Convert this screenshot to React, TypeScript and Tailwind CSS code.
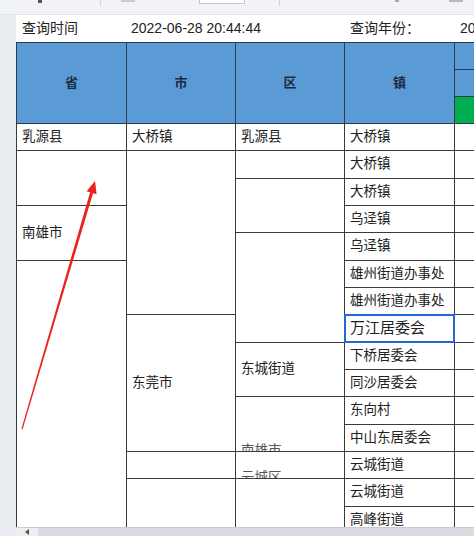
import React from 'react'

type Cell = { pos: string; text?: string; clip?: boolean }

const rowStart = [
  'row-start-1', 'row-start-2', 'row-start-3', 'row-start-4', 'row-start-5',
  'row-start-6', 'row-start-7', 'row-start-8', 'row-start-9', 'row-start-10',
  'row-start-11', 'row-start-12', 'row-start-13', 'row-start-14', 'row-start-15',
]

const towns = [
  '大桥镇', '大桥镇', '大桥镇', '乌迳镇', '乌迳镇', '雄州街道办事处', '雄州街道办事处',
  '万江居委会', '下桥居委会', '同沙居委会', '东向村', '中山东居委会', '云城街道', '云城街道', '高峰街道',
]

// merged cells of the first three columns
const merged: Cell[] = [
  { pos: 'col-start-1 row-start-1', text: '乳源县' },
  { pos: 'col-start-1 row-start-2 row-span-2' },
  { pos: 'col-start-1 row-start-4 row-span-2', text: '南雄市' },
  { pos: 'col-start-1 row-start-6 row-span-10' },
  { pos: 'col-start-2 row-start-1', text: '大桥镇' },
  { pos: 'col-start-2 row-start-2 row-span-6' },
  { pos: 'col-start-2 row-start-8 row-span-5', text: '东莞市' },
  { pos: 'col-start-2 row-start-13' },
  { pos: 'col-start-2 row-start-14 row-span-2' },
  { pos: 'col-start-3 row-start-1', text: '乳源县' },
  { pos: 'col-start-3 row-start-2' },
  { pos: 'col-start-3 row-start-3 row-span-2' },
  { pos: 'col-start-3 row-start-5 row-span-4' },
  { pos: 'col-start-3 row-start-9 row-span-2', text: '东城街道' },
  { pos: 'col-start-3 row-start-11 row-span-2', text: '南雄市', clip: true },
  { pos: 'col-start-3 row-start-13', text: '云城区', clip: true },
  { pos: 'col-start-3 row-start-14 row-span-2' },
]

const cellBase = 'border-r border-b border-[#3a3a3a] flex pl-[5px] text-[13.5px] text-[#222] whitespace-nowrap overflow-hidden'

function Arrow() {
  return (
    <svg className="absolute inset-0 pointer-events-none" width="474" height="536" viewBox="0 0 474 536">
      <polygon points="21.4,428.9 22.6,429.2 93.1,192.9 90.2,192.0" fill="#e8231c" />
      <polygon points="95,181 96.6,194.2 86.6,191.2" fill="#e8231c" />
    </svg>
  )
}

export default function App() {
  return (
    <div className="relative w-[474px] h-[536px] overflow-hidden bg-white flex flex-col font-['Liberation_Sans','Noto_Sans_CJK_SC',sans-serif]">
      {/* cut-off ribbon */}
      <div className="h-[15px] shrink-0 bg-[#f1f3f6] border-b border-[#e1e4e8] flex items-start">
        <div className="ml-[38px] w-[4px] h-[3px] bg-[#555]" />
        <div className="ml-[58px] w-px h-[6px] bg-[#d2d4d8]" />
        <div className="ml-[20px] w-[14px] h-[2px] bg-[#c9ccd1]" />
        <div className="ml-[64px] w-[46px] h-[4px] bg-white border-x border-b border-[#c4c7cc]" />
        <div className="ml-[34px] w-px h-[6px] bg-[#d2d4d8]" />
        <div className="ml-[115px] w-[4px] h-[2px] bg-[#aaa]" />
        <div className="ml-[50px] w-[14px] h-[2px] bg-[#bbb]" />
      </div>

      <div className="flex-1 flex min-h-0">
        <div className="w-[16px] shrink-0 bg-[#e9ecf0]" />

        <div className="flex-1 min-w-0 flex flex-col">
          {/* info row */}
          <div className="h-[27px] shrink-0 grid grid-cols-[110px_109px_109px_110px_1fr] items-center text-[14px] text-[#222] whitespace-nowrap overflow-hidden">
            <span className="pl-[6px]">查询时间</span>
            <span className="pl-[5px] col-span-2">2022-06-28 20:44:44</span>
            <span className="pl-[6px]">查询年份：</span>
            <span className="pl-[6px]">2022</span>
          </div>

          {/* header */}
          <div className="shrink-0 grid grid-cols-[110px_109px_109px_110px_1fr] grid-rows-[repeat(3,27px)] border-t border-l border-[#2b3b4d] bg-[#5b9bd5] text-[13px] font-bold text-[#1b2a40]">
            {['省', '市', '区', '镇'].map((h) => (
              <div key={h} className="row-span-3 border-r border-b border-[#2b3b4d] flex items-center justify-center">{h}</div>
            ))}
            <div className="col-start-5 row-start-1 border-b border-[#2b3b4d]" />
            <div className="col-start-5 row-start-2 border-b border-[#2b3b4d]" />
            <div className="col-start-5 row-start-3 border-b border-[#2b3b4d] bg-[#00b050]" />
          </div>

          {/* body */}
          <div className="flex-1 min-h-0 overflow-hidden">
            <div className="grid grid-cols-[110px_109px_109px_110px_1fr] grid-rows-[repeat(15,27.33px)] border-l border-[#3a3a3a]">
              {merged.map((c, i) => (
                <div key={i} className={`${c.pos} ${cellBase} ${c.clip ? 'items-end' : 'items-center'}`}>
                  {c.clip ? <span className="relative top-[10px] text-[#555]">{c.text}</span> : c.text}
                </div>
              ))}
              {towns.map((t, i) =>
                i === 7 ? (
                  <div key={t + i} className={`col-start-4 ${rowStart[i]} ${cellBase} items-center relative overflow-visible text-[15px] text-[#111]`}>
                    {t}
                    <div className="absolute -left-px -top-px right-[-1px] bottom-[-1px] border-2 border-[#2369d6]" />
                  </div>
                ) : (
                  <div key={t + i} className={`col-start-4 ${rowStart[i]} ${cellBase} items-center`}>{t}</div>
                )
              )}
              {rowStart.map((r) => (
                <div key={r} className={`col-start-5 ${r} border-b border-[#3a3a3a]`} />
              ))}
            </div>
          </div>

          {/* horizontal scrollbar */}
          <div className="h-[9px] shrink-0 flex bg-[#d9dce0] border-t border-[#c8ccd1]">
            <div className="w-[22px] bg-[#eceef1] flex items-center justify-center">
              <div className="w-0 h-0 border-y-[3px] border-y-transparent border-r-[4px] border-r-[#555]" />
            </div>
          </div>
        </div>
      </div>

      <Arrow />
    </div>
  )
}
